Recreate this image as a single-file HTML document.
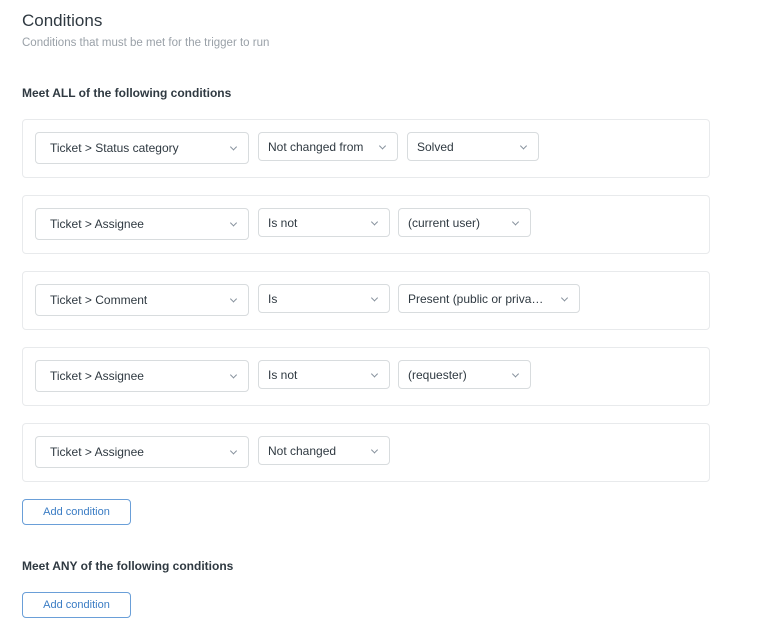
<!DOCTYPE html>
<html><head><style>
body{margin:0;width:768px;height:641px;background:#fff;font-family:"Liberation Sans",sans-serif;position:relative;overflow:hidden}
.a{position:absolute}
.box{position:absolute;left:22px;width:686px;height:57px;border:1px solid #e8eaec;border-radius:4px}
.s{position:absolute;border:1px solid #d8dcde;border-radius:4px;box-sizing:border-box;font-size:12px;color:#2f3941;padding-left:9px;line-height:28px;background:#fff}
.s:after{content:"";position:absolute;right:12px;top:50%;width:4px;height:4px;border-right:1px solid #87929d;border-bottom:1px solid #87929d;transform:translateY(-70%) rotate(45deg)}
.btn{position:absolute;left:22px;width:109px;height:26px;border:1px solid #6a9fd8;border-radius:4px;box-sizing:border-box;color:#3a7cc4;font-size:11px;text-align:center;line-height:24px}
</style></head><body>
<div class="a" style="left:22px;top:11px;font-size:17px;color:#2f3941">Conditions</div>
<div class="a" style="left:22px;top:37px;font-size:11.5px;color:#9aa1a8">Conditions that must be met for the trigger to run</div>
<div class="a" style="left:22px;top:86px;font-size:12px;font-weight:bold;color:#2f3941">Meet ALL of the following conditions</div>

<div class="box" style="top:119px"></div>
<div class="s" style="left:35px;top:132px;width:214px;height:32px;line-height:30px;padding-left:14px">Ticket &gt; Status category</div>
<div class="s" style="left:258px;top:132px;width:140px;height:29px">Not changed from</div>
<div class="s" style="left:407px;top:132px;width:132px;height:29px">Solved</div>

<div class="box" style="top:195px"></div>
<div class="s" style="left:35px;top:208px;width:214px;height:32px;line-height:30px;padding-left:14px">Ticket &gt; Assignee</div>
<div class="s" style="left:258px;top:208px;width:132px;height:29px">Is not</div>
<div class="s" style="left:398px;top:208px;width:133px;height:29px">(current user)</div>

<div class="box" style="top:271px"></div>
<div class="s" style="left:35px;top:284px;width:214px;height:32px;line-height:30px;padding-left:14px">Ticket &gt; Comment</div>
<div class="s" style="left:258px;top:284px;width:132px;height:29px">Is</div>
<div class="s" style="left:398px;top:284px;width:182px;height:29px">Present (public or priva…</div>

<div class="box" style="top:347px"></div>
<div class="s" style="left:35px;top:360px;width:214px;height:32px;line-height:30px;padding-left:14px">Ticket &gt; Assignee</div>
<div class="s" style="left:258px;top:360px;width:132px;height:29px">Is not</div>
<div class="s" style="left:398px;top:360px;width:133px;height:29px">(requester)</div>

<div class="box" style="top:423px"></div>
<div class="s" style="left:35px;top:436px;width:214px;height:32px;line-height:30px;padding-left:14px">Ticket &gt; Assignee</div>
<div class="s" style="left:258px;top:436px;width:132px;height:29px">Not changed</div>

<div class="btn" style="top:499px">Add condition</div>
<div class="a" style="left:22px;top:559px;font-size:12px;font-weight:bold;color:#2f3941">Meet ANY of the following conditions</div>
<div class="btn" style="top:592px">Add condition</div>
</body></html>
